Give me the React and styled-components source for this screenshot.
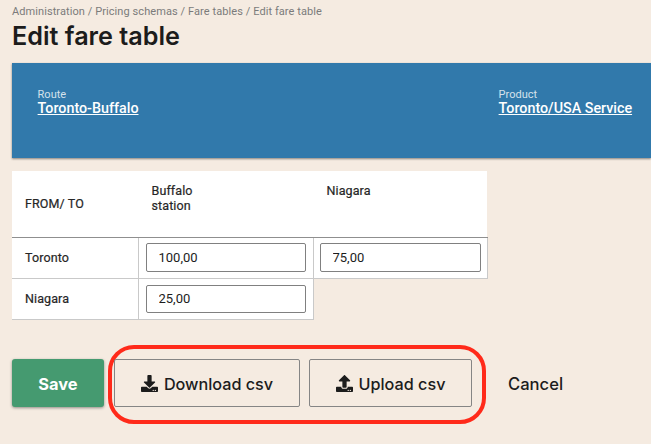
import React from 'react';
import styled, { createGlobalStyle } from 'styled-components';
import { FaDownload, FaUpload } from 'react-icons/fa';

const Global = createGlobalStyle`
  html, body {
    margin: 0;
    height: 100%;
    background: #f5ebe1;
    overflow: hidden;
  }
  body {
    font-family: Roboto, "Liberation Sans", sans-serif;
    color: #1c1c1c;
  }
`;

const Page = styled.div`
  width: 651px;
  height: 444px;
  padding: 5px 0 0 12px;
  box-sizing: border-box;
  overflow: hidden;
`;

const Breadcrumb = styled.div`
  font-size: 11px;
  line-height: 13px;
  color: #7b7b7b;
  letter-spacing: 0.08px;
`;

const Title = styled.h1`
  margin: 2px 0 0;
  font-family: Inter, sans-serif;
  font-size: 25.2px;
  line-height: 33px;
  font-weight: 600;
  color: #1c1c1c;
`;

const Banner = styled.div`
  margin-top: 10px;
  height: 95px;
  padding: 25px 0 0 25.6px;
  box-sizing: border-box;
  display: flex;
  background: #3179ab;
  box-shadow: 0 1px 2px rgba(0, 0, 0, 0.45);
`;

const Field = styled.div`
  width: ${props => props.$width}px;
  display: flex;
  flex-direction: column;
`;

const FieldLabel = styled.span`
  font-size: 11px;
  line-height: 13px;
  color: #d5e2ec;
`;

const FieldLink = styled.a`
  font-size: 14.3px;
  line-height: 15px;
  font-weight: 500;
  color: #fff;
  text-decoration: underline;
  white-space: nowrap;
`;

const Table = styled.table`
  margin-top: 13px;
  width: 475px;
  height: 148px;
  border-collapse: collapse;
  table-layout: fixed;
  font-size: 12.5px;
  letter-spacing: 0.1px;
  color: #262626;
`;

const HeadCell = styled.th`
  width: ${props => props.$width}px;
  height: 66px;
  padding: ${props => (props.$top ? '12px 0 0 13.5px' : '0 0 0 13px')};
  box-sizing: border-box;
  background: #fff;
  border-bottom: 1px solid #8f8f8f;
  font-weight: 400;
  line-height: 15px;
  text-align: left;
  vertical-align: ${props => (props.$top ? 'top' : 'middle')};
  -webkit-text-stroke: 0.2px #262626;
`;

const RowHead = styled.td`
  height: 41px;
  padding: 0 0 0 13px;
  background: #fff;
  border: 1px solid #c9c9c9;
  border-left: none;
  font-weight: 400;
  box-sizing: border-box;
  -webkit-text-stroke: 0.2px #262626;
`;

const Cell = styled.td`
  padding: 0 ${props => props.$pad}px;
  background: #fff;
  border: 1px solid #c9c9c9;
  box-sizing: border-box;
`;

const Amount = styled.input`
  display: block;
  width: 100%;
  height: ${props => props.$height}px;
  padding: 0 12px;
  box-sizing: border-box;
  border: 1px solid #808080;
  border-radius: 2px;
  background: #fff;
  font-family: Roboto, sans-serif;
  font-size: 13px;
  color: #1c1c1c;
  outline: none;
`;

const Actions = styled.div`
  margin-top: 25px;
  display: flex;
  align-items: flex-start;
`;

const SaveButton = styled.button`
  margin-top: 14px;
  width: 92px;
  height: 48px;
  padding: 2px 0 0;
  border: none;
  border-radius: 3px;
  background: #459a70;
  box-shadow: 0 1px 3px rgba(0, 0, 0, 0.4);
  color: #fff;
  font-family: Inter, sans-serif;
  font-size: 16.4px;
  font-weight: 700;
`;

const Highlight = styled.div`
  margin-left: 4px;
  padding: 10px 10px 13px 2px;
  display: flex;
  gap: 9px;
  border: 4px solid #ff2a1a;
  border-radius: 26px;
`;

const OutlineButton = styled.button`
  width: ${props => props.$width}px;
  height: 48px;
  padding: 2px 0 0;
  display: flex;
  align-items: center;
  justify-content: center;
  gap: 6px;
  border: 1px solid #858585;
  border-radius: 2px;
  background: transparent;
  color: #1c1c1c;
  font-family: Inter, sans-serif;
  font-size: 16.2px;
  font-weight: 500;
`;

const CancelButton = styled.button`
  margin: 14px 0 0 22px;
  height: 48px;
  padding: 2px 0 0;
  border: none;
  background: none;
  color: #1c1c1c;
  font-family: Inter, sans-serif;
  font-size: 16.6px;
  font-weight: 500;
`;

const App = () => {
  return (
    <Page>
      <Global />
      <Breadcrumb>Administration / Pricing schemas / Fare tables / Edit fare table</Breadcrumb>
      <Title>Edit fare table</Title>
      <Banner>
        <Field $width={461}>
          <FieldLabel>Route</FieldLabel>
          <FieldLink href="#">Toronto-Buffalo</FieldLink>
        </Field>
        <Field $width={150}>
          <FieldLabel>Product</FieldLabel>
          <FieldLink href="#">Toronto/USA Service</FieldLink>
        </Field>
      </Banner>
      <Table>
        <thead>
          <tr>
            <HeadCell $width={126}>FROM/ TO</HeadCell>
            <HeadCell $width={175} $top>Buffalo<br />station</HeadCell>
            <HeadCell $width={174} $top>Niagara</HeadCell>
          </tr>
        </thead>
        <tbody>
          <tr>
            <RowHead>Toronto</RowHead>
            <Cell $pad={7}><Amount $height={29} defaultValue="100,00" /></Cell>
            <Cell $pad={6}><Amount $height={29} defaultValue="75,00" /></Cell>
          </tr>
          <tr>
            <RowHead>Niagara</RowHead>
            <Cell $pad={7}><Amount $height={28} defaultValue="25,00" /></Cell>
          </tr>
        </tbody>
      </Table>
      <Actions>
        <SaveButton>Save</SaveButton>
        <Highlight>
          <OutlineButton $width={186}><FaDownload size={17} />Download csv</OutlineButton>
          <OutlineButton $width={163}><FaUpload size={17} />Upload csv</OutlineButton>
        </Highlight>
        <CancelButton>Cancel</CancelButton>
      </Actions>
    </Page>
  );
};

export default App;
